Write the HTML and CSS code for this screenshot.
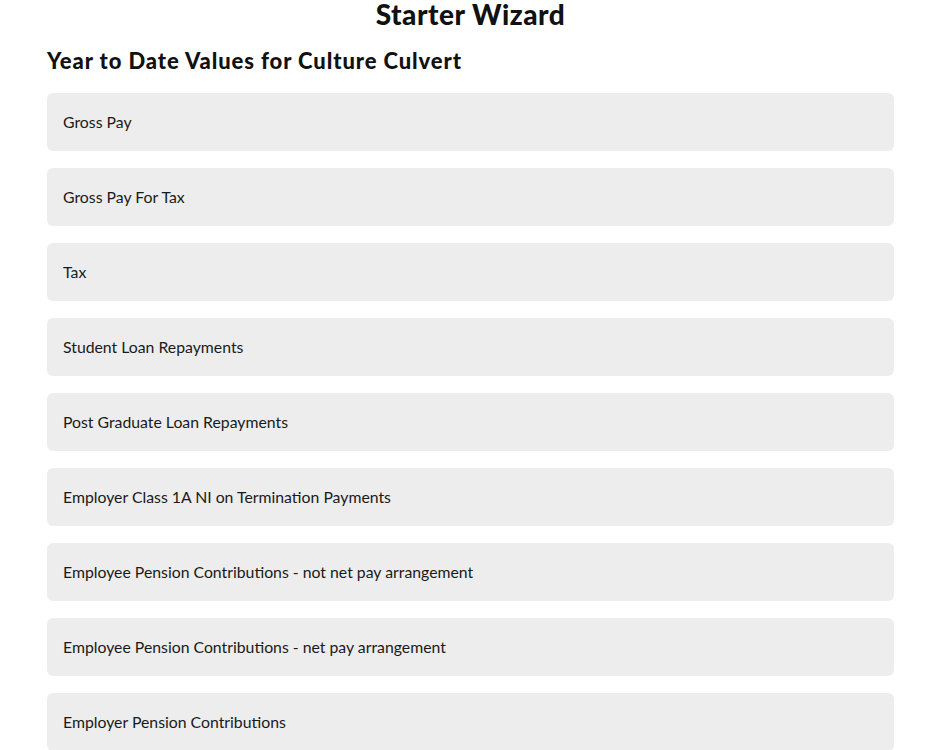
FILE: index.html
```html
<!DOCTYPE html>
<html lang="en">
<head>
    <meta charset="UTF-8">
    <title>Starter Wizard</title>
    <link rel="stylesheet" href="styles.css">
</head>
<body>
    <div class="wizard">
        <h1>Starter Wizard</h1>
        <h2>Year to Date Values for Culture Culvert</h2>

        <!-- YTD fields -->
        <div class="field-list">
            <div class="field">Gross Pay</div>
            <div class="field">Gross Pay For Tax</div>
            <div class="field">Tax</div>
            <div class="field">Student Loan Repayments</div>
            <div class="field">Post Graduate Loan Repayments</div>
            <div class="field">Employer Class 1A NI on Termination Payments</div>
            <div class="field">Employee Pension Contributions - not net pay arrangement</div>
            <div class="field">Employee Pension Contributions - net pay arrangement</div>
            <div class="field">Employer Pension Contributions</div>
        </div>
    </div>
</body>
</html>
```

FILE: styles.css
```css
body {
    margin: 0;
    padding: 0;
    background: #fff;
    color: #111;
    font-family: Lato, "Open Sans", sans-serif;
    overflow: hidden;
}

.wizard {
    width: 847px;
    margin-left: 47px;
}

h1 {
    font-family: Lato, sans-serif;
    font-weight: 900;
    font-size: 28px;
    text-align: center;
    margin: 0;
    line-height: 28px;
    letter-spacing: 0.5px;
}

h2 {
    font-family: Lato, sans-serif;
    font-weight: 900;
    font-size: 22px;
    margin: 21px 0 0;
    line-height: 24px;
    letter-spacing: 0.9px;
}

.field-list {
    display: flex;
    flex-direction: column;
    gap: 17px;
    margin-top: 20px;
}

.field {
    box-sizing: border-box;
    background: #ededed;
    border-radius: 6px;
    height: 58px;
    padding: 0 16px 2px;
    display: flex;
    align-items: center;
    font-size: 15.8px;
    color: #1a1a1a;
}
```
